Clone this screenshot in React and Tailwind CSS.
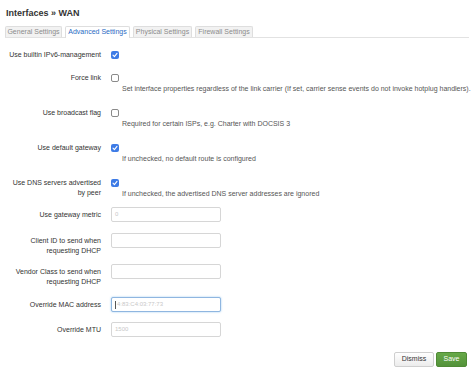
import React from "react";

const font = { fontFamily: '"Liberation Sans", Arial, sans-serif' };

function Check({ checked }) {
  if (checked) {
    return (
      <span className="flex h-[8px] w-[8px] items-center justify-center rounded-[2px] bg-[#3d7be6]">
        <svg width="6" height="6" viewBox="0 0 6 6">
          <path d="M1 3.2 L2.4 4.6 L5 1.4" fill="none" stroke="#fff" strokeWidth="1.1" strokeLinecap="round" strokeLinejoin="round" />
        </svg>
      </span>
    );
  }
  return <span className="block h-[8px] w-[8px] rounded-[2px] border border-[#8a8a8a] bg-white" />;
}

function CheckRow({ label, checked, desc, mt, twoLine }) {
  return (
    <div className={`flex ${mt}`}>
      <div className="w-[96px] shrink-0 text-right leading-[9px] text-[#333]">
        {twoLine ? (
          <>
            <div className="leading-[10px]">{label[0]}</div>
            <div>{label[1]}</div>
          </>
        ) : (
          <div className="leading-[10px]">{label}</div>
        )}
      </div>
      <div className="ml-[10px] flex flex-col">
        <div className="flex h-[10px] items-center">
          <Check checked={checked} />
        </div>
        {desc && <div className="ml-[11px] mt-[1px] whitespace-nowrap leading-[10px] text-[#555]">{desc}</div>}
      </div>
    </div>
  );
}

function InputRow({ label, placeholder, mt, focus }) {
  const lines = Array.isArray(label) ? label : [label];
  return (
    <div className={`flex items-start ${mt}`}>
      <div className="w-[96px] shrink-0 pt-[3px] text-right leading-[10px] text-[#333]">
        {lines.map((l, i) => (
          <div key={i}>{l}</div>
        ))}
      </div>
      <div
        className={`ml-[10px] flex h-[15px] w-[110px] items-center rounded-[2px] border bg-white px-[3px] text-[6px] text-[#c8c8c8] ${
          focus ? "border-[#8fb6e0] shadow-[0_0_2px_rgba(102,175,233,0.7)]" : "border-[#d6d6d6]"
        }`}
      >
        {focus && <span className="mr-[1px] inline-block h-[8px] w-[1px] bg-[#555]" />}
        {placeholder}
      </div>
    </div>
  );
}

export default function App() {
  return (
    <div className="h-[372px] w-[474px] overflow-hidden bg-white px-[5px] text-[7px]" style={font}>
      <div className="pt-[7px] pl-[1px] text-[9px] font-bold leading-[12px] text-[#333]">Interfaces » WAN</div>
      <div className="mt-[7px] flex gap-[3px] border-b border-[#e2e2e2]">
        <div className="h-[11px] w-[57px] rounded-t-[2px] border border-b-0 border-[#dedede] bg-[#f2f2f2] text-center leading-[10px] text-[#8c8c8c]">
          General Settings
        </div>
        <div className="-mb-[1px] h-[12px] w-[65px] rounded-t-[2px] border border-b-0 border-[#dedede] bg-white text-center leading-[10px] text-[#2a6bc4]">
          Advanced Settings
        </div>
        <div className="h-[11px] w-[59px] rounded-t-[2px] border border-b-0 border-[#dedede] bg-[#f2f2f2] text-center leading-[10px] text-[#8c8c8c]">
          Physical Settings
        </div>
        <div className="h-[11px] w-[58px] rounded-t-[2px] border border-b-0 border-[#dedede] bg-[#f2f2f2] text-center leading-[10px] text-[#8c8c8c]">
          Firewall Settings
        </div>
      </div>

      <CheckRow mt="mt-[12px]" label="Use builtin IPv6-management" checked />
      <CheckRow
        mt="mt-[13px]"
        label="Force link"
        desc="Set interface properties regardless of the link carrier (If set, carrier sense events do not invoke hotplug handlers)."
      />
      <CheckRow mt="mt-[14px]" label="Use broadcast flag" desc="Required for certain ISPs, e.g. Charter with DOCSIS 3" />
      <CheckRow mt="mt-[14px]" label="Use default gateway" checked desc="If unchecked, no default route is configured" />
      <CheckRow
        mt="mt-[14px]"
        twoLine
        label={["Use DNS servers advertised", "by peer"]}
        checked
        desc="If unchecked, the advertised DNS server addresses are ignored"
      />

      <InputRow mt="mt-[8px]" label="Use gateway metric" placeholder="0" />
      <InputRow mt="mt-[11px]" label={["Client ID to send when", "requesting DHCP"]} />
      <InputRow mt="mt-[8px]" label={["Vendor Class to send when", "requesting DHCP"]} />
      <InputRow mt="mt-[10px]" label="Override MAC address" placeholder="4:83:C4:03:77:73" focus />
      <InputRow mt="mt-[10px]" label="Override MTU" placeholder="1500" />

      <div className="mt-[15px] flex justify-end gap-[2px] pr-[2px]">
        <div className="flex h-[15px] w-[40px] items-center justify-center rounded-[2px] border border-[#cfcfcf] bg-gradient-to-b from-white to-[#ececec] text-[7px] text-[#333]">
          Dismiss
        </div>
        <div className="flex h-[15px] w-[31px] items-center justify-center rounded-[2px] border border-[#4f8a35] bg-gradient-to-b from-[#67a948] to-[#53923a] text-[7px] text-white">
          Save
        </div>
      </div>
    </div>
  );
}
